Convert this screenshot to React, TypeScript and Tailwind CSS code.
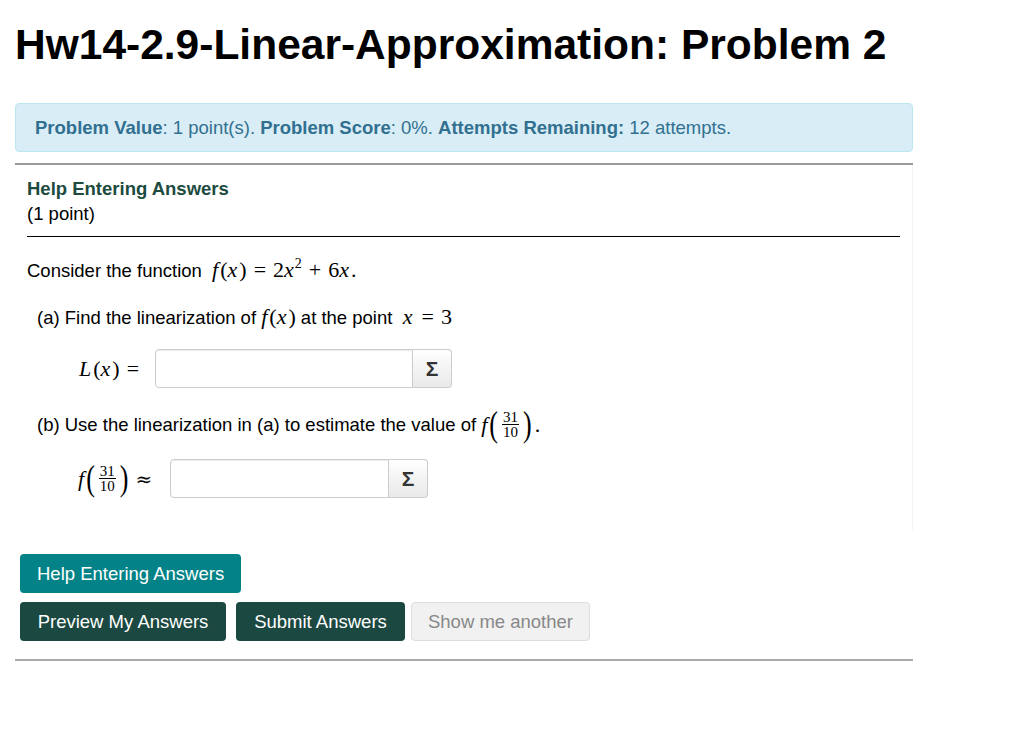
import React from 'react';

const sans = { fontFamily: '"Liberation Sans", Arial, sans-serif' };

function M({ children }: { children: React.ReactNode }) {
  return <span className="font-['Liberation_Serif',serif] text-[22px]">{children}</span>;
}

function I({ children }: { children: React.ReactNode }) {
  return <i className="font-['Liberation_Serif',serif] pr-[2px]">{children}</i>;
}

function Op({ children }: { children: React.ReactNode }) {
  return <span className="mx-[7px]">{children}</span>;
}

function Frac() {
  return (
    <span className="inline-flex items-center align-middle">
      <span className="text-[26px] leading-none scale-y-[1.35] font-light">(</span>
      <span className="inline-flex flex-col items-center text-[15px] leading-[14px] mx-[4px]">
        <span className="px-[1px]">31</span>
        <span className="border-t border-black px-[1px]">10</span>
      </span>
      <span className="text-[26px] leading-none scale-y-[1.35] font-light">)</span>
    </span>
  );
}

function AnswerBox({ width }: { width: string }) {
  return (
    <div className="flex h-[39px]">
      <div className={`${width} h-full rounded-l-[4px] border border-[#ccc] bg-white shadow-[inset_0_1px_1px_rgba(0,0,0,0.08)]`} />
      <div className="w-[39px] h-full rounded-r-[4px] border border-l-0 border-[#ccc] bg-gradient-to-b from-white to-[#e9e9e9] flex items-center justify-center text-[21px] font-bold text-[#333]">
        Σ
      </div>
    </div>
  );
}

export default function App() {
  return (
    <div className="min-h-[737px] bg-white text-black" style={sans}>
      <div className="w-[898px] ml-[15px]">
        <h1 className="pt-[20px] text-[42.5px] font-bold leading-[50px]">
          Hw14-2.9-Linear-Approximation: Problem 2
        </h1>

        <div className="mt-[33px] h-[49px] rounded-[4px] border border-[#bce8f1] bg-[#d9edf7] px-[19px] flex items-center text-[18.5px] text-[#31708f]">
          <span>
            <b>Problem Value</b>: 1 point(s). <b>Problem Score</b>: 0%. <b>Attempts Remaining:</b> 12 attempts.
          </span>
        </div>

        <div className="mt-[11px] border-t-2 border-[#999]" />

        <div className="border-r border-[#f3f3f3] pl-[12px] pr-[12px] h-[365px]">
          <div className="pt-[12px] text-[18.5px] font-bold text-[#1d4b3f] leading-[24px]">Help Entering Answers</div>
          <div className="text-[18.5px] leading-[26px]">(1 point)</div>
          <div className="mt-[9px] border-t border-black" />

          <div className="mt-[20px] flex items-baseline text-[18.5px] leading-[26px]">
            <span>Consider the function&nbsp;&nbsp;</span>
            <M>
              <I>f</I>(<I>x</I>)<Op>=</Op>2<i className="pr-[1px]">x</i>
              <sup className="text-[14px] -top-[0.65em]">2</sup>
              <Op>+</Op>6<I>x</I>.
            </M>
          </div>

          <div className="mt-[20px] ml-[10px] flex items-baseline text-[18.5px] leading-[26px]">
            <span>(a) Find the linearization of&nbsp;</span>
            <M>
              <I>f</I>(<I>x</I>)
            </M>
            <span>&nbsp;at the point&nbsp;&nbsp;</span>
            <M>
              <I>x</I>
              <Op>=</Op>3
            </M>
          </div>

          <div className="mt-[18px] flex items-center">
            <div className="w-[128px] pl-[52px]">
              <M>
                <I>L</I>(<I>x</I>)<span className="ml-[7px]">=</span>
              </M>
            </div>
            <AnswerBox width="w-[258px]" />
          </div>

          <div className="mt-[22px] ml-[10px] flex items-center text-[18.5px] leading-[26px]">
            <span>(b) Use the linearization in (a) to estimate the value of&nbsp;</span>
            <span className="font-['Liberation_Serif',serif] text-[22px] flex items-center">
              <I>f</I>
              <Frac />
              <span className="ml-[3px]">.</span>
            </span>
          </div>

          <div className="mt-[20px] flex items-center">
            <div className="w-[143px] pl-[51px] font-['Liberation_Serif',serif] text-[22px] flex items-center">
              <I>f</I>
              <Frac />
              <span className="ml-[7px] font-['DejaVu_Serif',serif] text-[20px]">≈</span>
            </div>
            <AnswerBox width="w-[219px]" />
          </div>
        </div>

        <div className="mt-[24px] ml-[5px] flex flex-col gap-[9px] text-[18.5px]">
          <div>
            <button className="h-[39px] px-[17px] rounded-[4px] bg-[#038387] text-white">Help Entering Answers</button>
          </div>
          <div className="flex gap-[10px]">
            <button className="h-[39px] w-[206px] rounded-[4px] bg-[#1b4840] text-white">Preview My Answers</button>
            <button className="h-[39px] w-[169px] rounded-[4px] bg-[#1b4840] text-white">Submit Answers</button>
            <button className="-ml-[4px] h-[39px] w-[179px] rounded-[4px] border border-[#ddd] bg-[#f1f1f1] text-[#888]">Show me another</button>
          </div>
        </div>

        <div className="mt-[18px] border-t-2 border-[#aaa]" />
      </div>
    </div>
  );
}
